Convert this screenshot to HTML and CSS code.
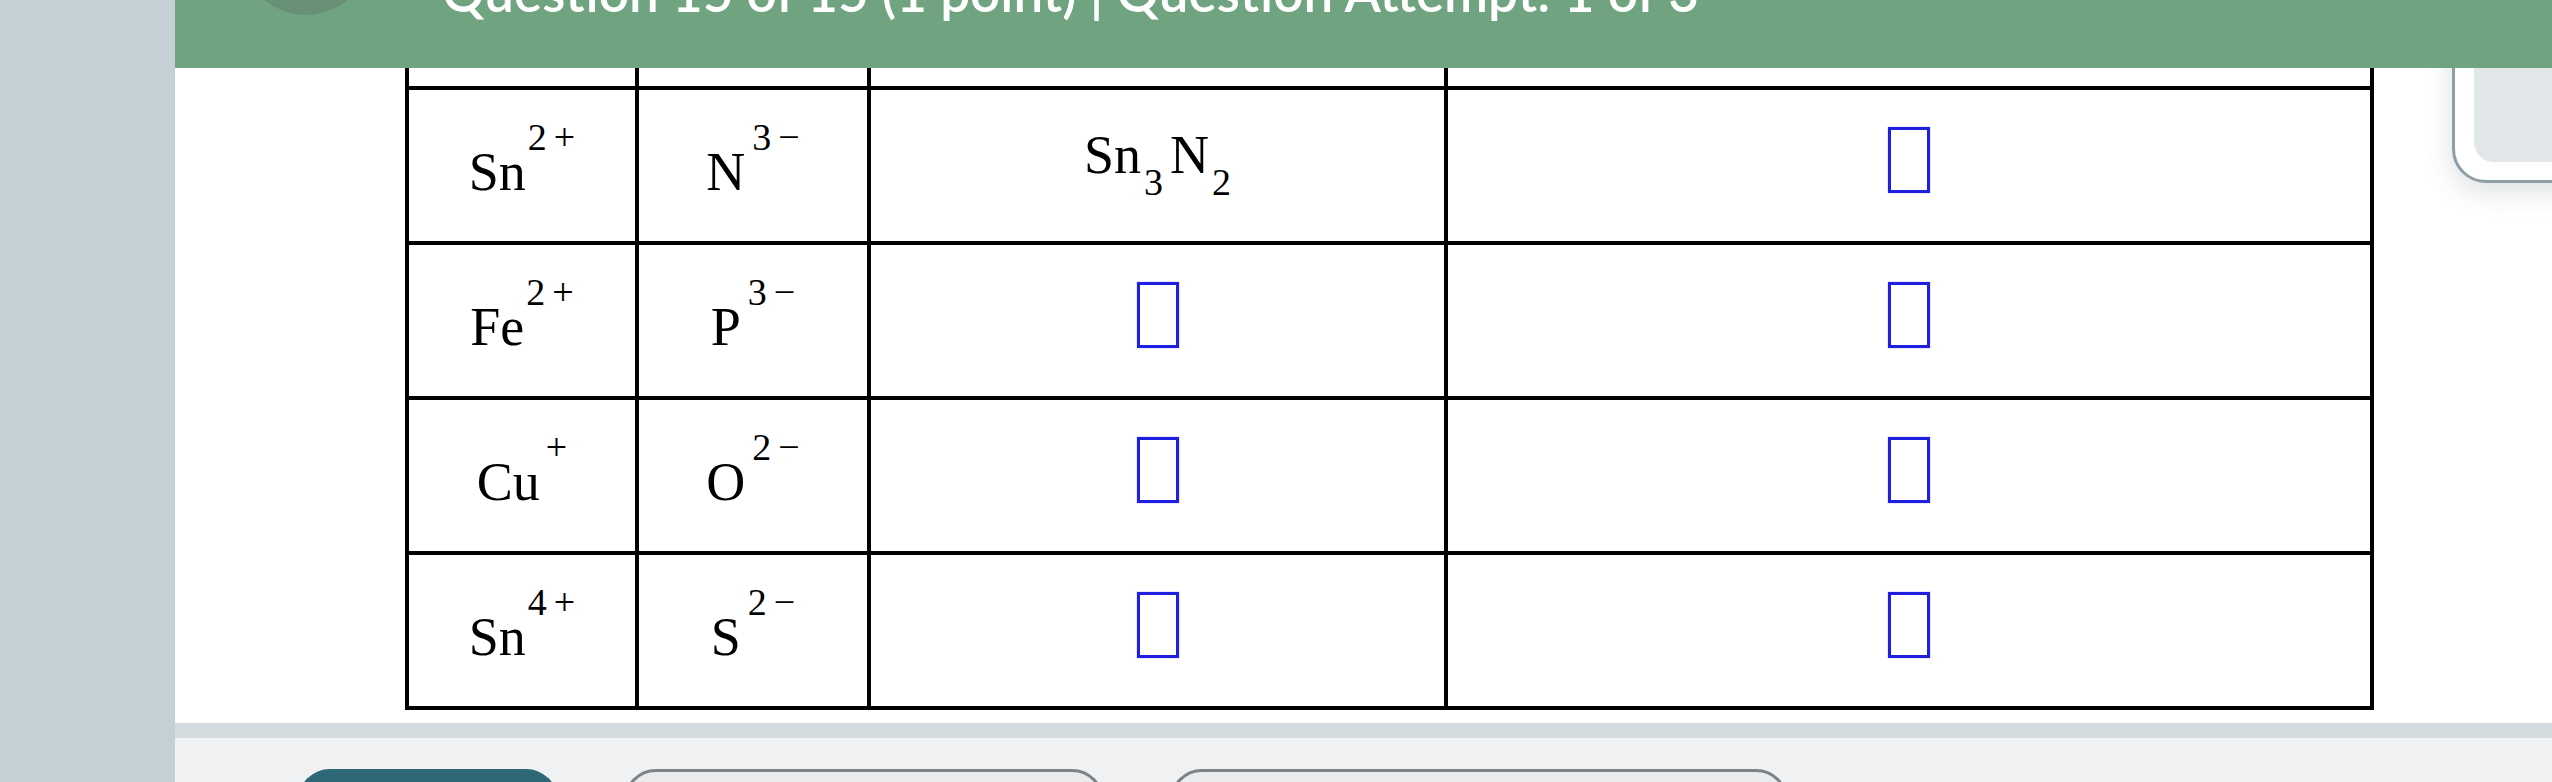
FILE: index.html
```html
<!DOCTYPE html>
<html lang="en">
<head>
    <meta charset="UTF-8">
    <meta name="viewport" content="width=device-width, initial-scale=1.0">
    <title>Question 15 of 15</title>
    <link rel="stylesheet" href="styles.css">
</head>
<body>
    <div class="sidebar"></div>

    <div class="main">
        <div class="topbar">
            <div class="avatar"></div>
            <div class="topbar-title">Question 15 of 15 (1 point) | Question Attempt: 1 of 3</div>
        </div>

        <div class="side-card">
            <div class="side-card-inner"></div>
        </div>

        <div class="question">
            <table class="ions">
                <colgroup>
                    <col class="col-cation">
                    <col class="col-anion">
                    <col class="col-formula">
                    <col class="col-name">
                </colgroup>
                <tr class="row-cut">
                    <td></td><td></td><td></td><td></td>
                </tr>
                <tr>
                    <td><span class="chem">Sn<sup>2<span class="sign">+</span></sup></span></td>
                    <td><span class="chem">N<sup class="wide">3<span class="sign">&minus;</span></sup></span></td>
                    <td class="formula-cell"><span class="chem">Sn<sub>3</sub>N<sub>2</sub></span></td>
                    <td class="box-cell"><span class="answer-box"></span></td>
                </tr>
                <tr>
                    <td><span class="chem">Fe<sup>2<span class="sign">+</span></sup></span></td>
                    <td><span class="chem">P<sup class="wide">3<span class="sign">&minus;</span></sup></span></td>
                    <td class="box-cell"><span class="answer-box"></span></td>
                    <td class="box-cell"><span class="answer-box"></span></td>
                </tr>
                <tr>
                    <td><span class="chem">Cu<sup class="charge-only">+</sup></span></td>
                    <td><span class="chem">O<sup class="wide">2<span class="sign">&minus;</span></sup></span></td>
                    <td class="box-cell"><span class="answer-box"></span></td>
                    <td class="box-cell"><span class="answer-box"></span></td>
                </tr>
                <tr>
                    <td><span class="chem">Sn<sup>4<span class="sign">+</span></sup></span></td>
                    <td><span class="chem">S<sup class="wide">2<span class="sign">&minus;</span></sup></span></td>
                    <td class="box-cell"><span class="answer-box"></span></td>
                    <td class="box-cell"><span class="answer-box"></span></td>
                </tr>
            </table>
        </div>

        <div class="band"></div>

        <div class="actions">
            <button class="btn btn-primary"></button>
            <button class="btn btn-outline btn-medium"></button>
            <button class="btn btn-outline btn-wide"></button>
        </div>
    </div>
</body>
</html>
```

FILE: styles.css
```css
* {
    margin: 0;
    padding: 0;
    box-sizing: border-box;
}

body {
    font-family: "Liberation Serif", "Times New Roman", serif;
    background-color: #ffffff;
    color: #000000;
    width: 2552px;
    height: 782px;
    overflow: hidden;
    display: flex;
}

.sidebar {
    width: 175px;
    flex-shrink: 0;
    background: #c5d0d5;
}

.main {
    flex: 1;
    display: flex;
    flex-direction: column;
    position: relative;
    min-width: 0;
}

.topbar {
    height: 68px;
    flex-shrink: 0;
    background: #70a37f;
    display: flex;
    align-items: flex-start;
    gap: 71px;
    padding-left: 66px;
    overflow: hidden;
    position: relative;
    z-index: 2;
}

.avatar {
    width: 130px;
    height: 130px;
    flex-shrink: 0;
    margin-top: -115px;
    border-radius: 50%;
    background: #689077;
}

.topbar-title {
    margin-top: -35px;
    font-family: Lato, "Open Sans", sans-serif;
    font-size: 53px;
    font-weight: 600;
    line-height: 1;
    color: #ffffff;
    white-space: nowrap;
}

.side-card {
    position: absolute;
    top: -60px;
    left: 2277px;
    width: 220px;
    height: 243px;
    padding: 19px 19px 18px;
    background: #ffffff;
    border: 3px solid #8e9ea6;
    border-radius: 34px;
    box-shadow: 0 8px 28px rgba(40, 60, 70, 0.16);
    z-index: 1;
}

.side-card-inner {
    height: 100%;
    background: #e1e6e9;
    border-radius: 20px;
}

.question {
    height: 655px;
    flex-shrink: 0;
    background: #ffffff;
    padding-left: 230px;
    overflow: hidden;
}

.ions {
    table-layout: fixed;
    width: 1969px;
    border-spacing: 4px;
    background: #000000;
    margin-top: -4px;
}

.col-cation { width: 226px; }
.col-anion { width: 228px; }
.col-formula { width: 573px; }
.col-name { width: 922px; }

.ions tr {
    height: 151px;
}

.ions tr.row-cut {
    height: 18px;
}

.ions td {
    background: #ffffff;
    text-align: center;
    vertical-align: top;
    padding-top: 28px;
}

.ions tr.row-cut td {
    padding: 0;
}

.chem {
    font-size: 54px;
    line-height: 54px;
    white-space: nowrap;
}

.chem sup {
    font-size: 38px;
    line-height: 38px;
    vertical-align: 40px;
    margin-left: 2px;
}

.chem sup.wide {
    margin-left: 7px;
}

.chem sup.charge-only {
    margin-left: 6px;
}

.chem .sign {
    margin-left: 7px;
}

.chem sub {
    font-size: 38px;
    line-height: 38px;
    vertical-align: -22px;
    margin: 0 7px 0 3px;
}

.chem sub:last-child {
    margin-right: 0;
}

.ions td.formula-cell {
    padding-top: 38px;
}

.ions td.box-cell {
    padding-top: 37px;
}

.answer-box {
    display: block;
    width: 42px;
    height: 66px;
    margin: 0 auto;
    border: 3px solid #1f1fe0;
    box-shadow: 0 0 1px rgba(31, 31, 224, 0.6);
}

.band {
    height: 15px;
    flex-shrink: 0;
    background: #d4dbde;
}

.actions {
    flex: 1;
    background: #eff1f3;
    display: flex;
    align-items: flex-start;
    gap: 66px;
    padding: 31px 0 0 123px;
}

.btn {
    height: 72px;
    border-radius: 32px;
    cursor: pointer;
    flex-shrink: 0;
}

.btn-primary {
    width: 260px;
    background: #2e6777;
    border: none;
}

.btn-outline {
    background: #e9ebec;
    border: 3px solid #7b8386;
}

.btn-medium {
    width: 480px;
}

.btn-wide {
    width: 618px;
}
```
